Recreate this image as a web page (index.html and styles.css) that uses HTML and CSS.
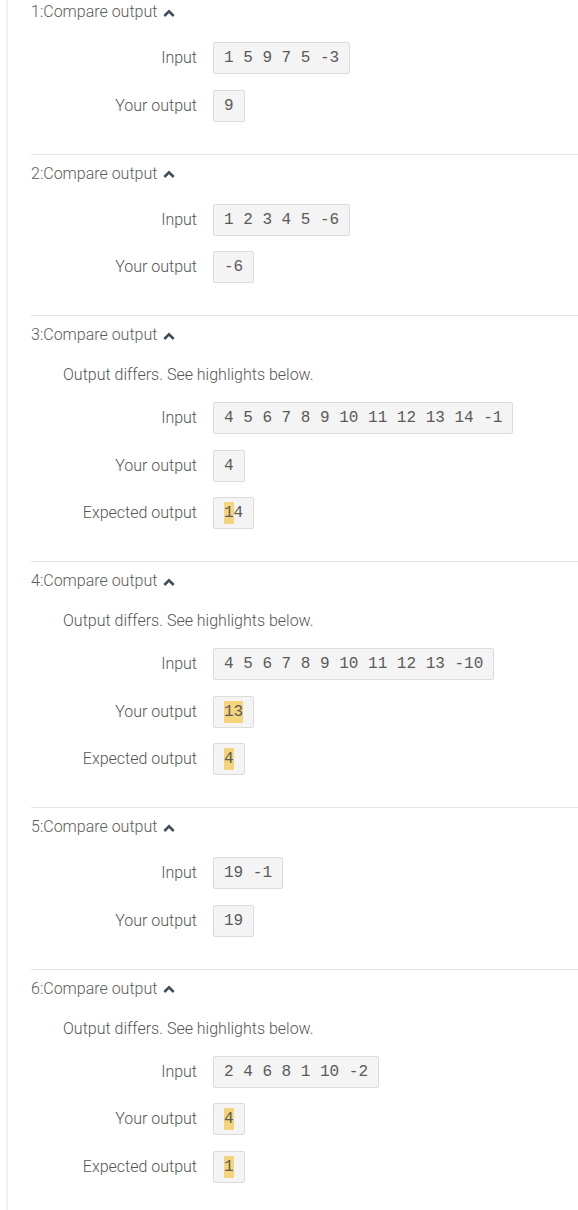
FILE: index.html
```html
<!DOCTYPE html>
<html>
<head>
<meta charset="utf-8">
<link rel="stylesheet" href="styles.css">
</head>
<body>
<div class="panel">

  <section class="test first">
    <div class="test-head">1:Compare output <svg class="chev" viewBox="0 0 12 8" width="12" height="8"><path d="M1.3 7 L6 2.3 L10.7 7" /></svg></div>
    <div class="rows">
      <div class="label">Input</div><div class="box">1 5 9 7 5 -3</div>
      <div class="label">Your output</div><div class="box">9</div>
    </div>
  </section>

  <section class="test">
    <div class="test-head">2:Compare output <svg class="chev" viewBox="0 0 12 8" width="12" height="8"><path d="M1.3 7 L6 2.3 L10.7 7" /></svg></div>
    <div class="rows">
      <div class="label">Input</div><div class="box">1 2 3 4 5 -6</div>
      <div class="label">Your output</div><div class="box">-6</div>
    </div>
  </section>

  <section class="test">
    <div class="test-head">3:Compare output <svg class="chev" viewBox="0 0 12 8" width="12" height="8"><path d="M1.3 7 L6 2.3 L10.7 7" /></svg></div>
    <div class="differs">Output differs. See highlights below.</div>
    <div class="rows after-differs">
      <div class="label">Input</div><div class="box">4 5 6 7 8 9 10 11 12 13 14 -1</div>
      <div class="label">Your output</div><div class="box">4</div>
      <div class="label">Expected output</div><div class="box"><span class="hl">1</span>4</div>
    </div>
  </section>

  <section class="test">
    <div class="test-head">4:Compare output <svg class="chev" viewBox="0 0 12 8" width="12" height="8"><path d="M1.3 7 L6 2.3 L10.7 7" /></svg></div>
    <div class="differs">Output differs. See highlights below.</div>
    <div class="rows after-differs">
      <div class="label">Input</div><div class="box">4 5 6 7 8 9 10 11 12 13 -10</div>
      <div class="label">Your output</div><div class="box"><span class="hl">13</span></div>
      <div class="label">Expected output</div><div class="box"><span class="hl">4</span></div>
    </div>
  </section>

  <section class="test">
    <div class="test-head">5:Compare output <svg class="chev" viewBox="0 0 12 8" width="12" height="8"><path d="M1.3 7 L6 2.3 L10.7 7" /></svg></div>
    <div class="rows">
      <div class="label">Input</div><div class="box">19 -1</div>
      <div class="label">Your output</div><div class="box">19</div>
    </div>
  </section>

  <section class="test">
    <div class="test-head">6:Compare output <svg class="chev" viewBox="0 0 12 8" width="12" height="8"><path d="M1.3 7 L6 2.3 L10.7 7" /></svg></div>
    <div class="differs">Output differs. See highlights below.</div>
    <div class="rows after-differs">
      <div class="label">Input</div><div class="box">2 4 6 8 1 10 -2</div>
      <div class="label">Your output</div><div class="box"><span class="hl">4</span></div>
      <div class="label">Expected output</div><div class="box"><span class="hl">1</span></div>
    </div>
  </section>

</div>
</body>
</html>
```

FILE: styles.css
```css
html, body {
  margin: 0;
  padding: 0;
  background: #ffffff;
}

body {
  font-family: Roboto, "Liberation Sans", sans-serif;
  font-weight: 300;
  font-size: 16px;
  color: #555555;
  height: 1210px;
  overflow: hidden;
}

.panel {
  margin-left: 6px;
  border-left: 2px solid #f0f0f0;
  padding-left: 23px;
  min-height: 1210px;
}

.test {
  border-top: 1px solid #e6e6e6;
  padding-top: 7px;
  padding-bottom: 32px;
}

.test.first {
  border-top: none;
  padding-top: 0;
}

.test-head {
  height: 24px;
  line-height: 24px;
  display: flex;
  align-items: center;
  gap: 6px;
  color: #5c5c5c;
}

.chev {
  display: block;
  margin-top: 1px;
}

.chev path {
  fill: none;
  stroke: #3f4d5a;
  stroke-width: 2.5;
  stroke-linecap: butt;
  stroke-linejoin: miter;
}

.differs {
  margin-top: 16px;
  margin-left: 32px;
  line-height: 24px;
  height: 24px;
  color: #555555;
}

.rows {
  margin-top: 18px;
  margin-left: 32px;
  display: grid;
  grid-template-columns: 134px max-content;
  column-gap: 16px;
  row-gap: 15.5px;
  align-items: center;
}

.rows.after-differs {
  margin-top: 15px;
}

.label {
  text-align: right;
  line-height: 24px;
  color: #555555;
}

.box {
  justify-self: start;
  box-sizing: border-box;
  height: 32px;
  padding: 4px 10px;
  border: 1px solid #dcdcdc;
  border-radius: 2px;
  background: #f4f4f4;
  font-family: "Liberation Mono", "Courier New", monospace;
  font-weight: 400;
  font-size: 16px;
  line-height: 22px;
  color: #5a5a5a;
  white-space: pre;
}

.hl {
  display: inline-block;
  height: 22px;
  line-height: 22px;
  background: #f5d47c;
}
```
